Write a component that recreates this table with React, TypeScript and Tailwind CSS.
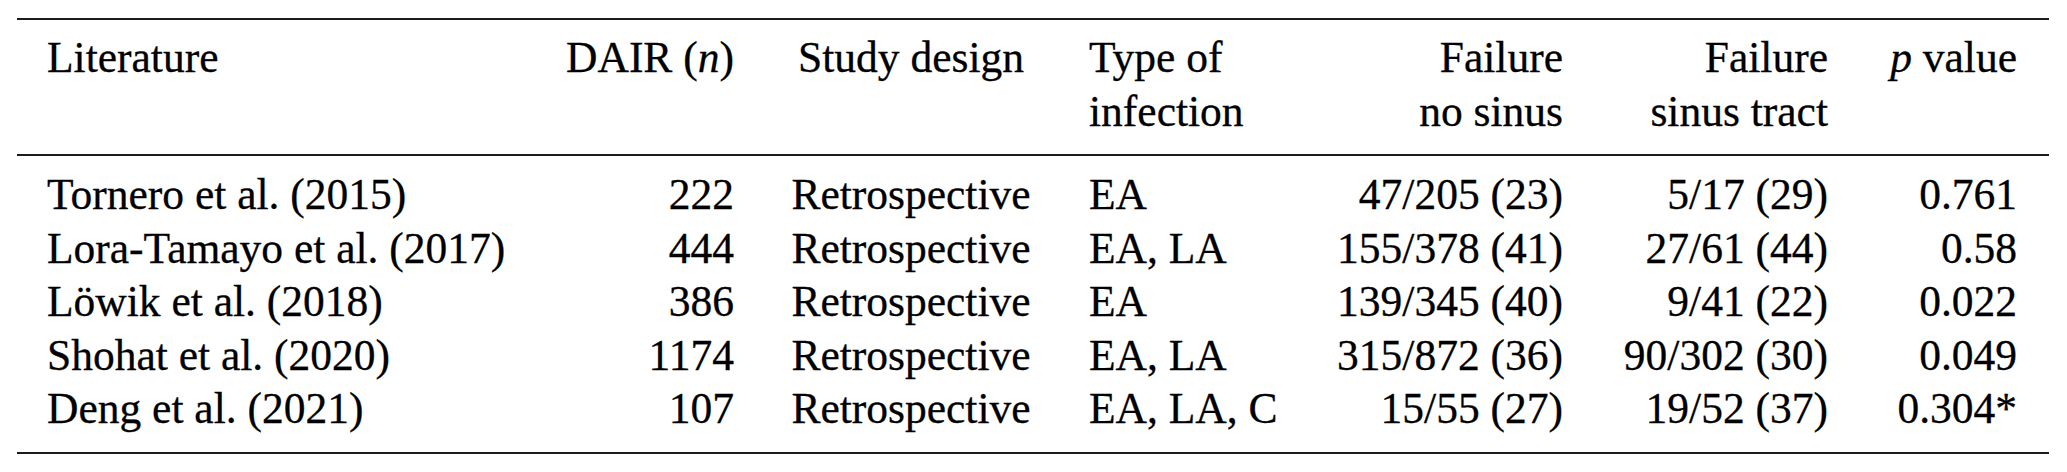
import * as React from "react";

type Row = {
  study: string;
  n: string;
  design: string;
  type: string;
  noSinus: string;
  sinus: string;
  p: string;
};

const ROWS: Row[] = [
  { study: "Tornero et al. (2015)", n: "222", design: "Retrospective", type: "EA", noSinus: "47/205 (23)", sinus: "5/17 (29)", p: "0.761" },
  { study: "Lora-Tamayo et al. (2017)", n: "444", design: "Retrospective", type: "EA, LA", noSinus: "155/378 (41)", sinus: "27/61 (44)", p: "0.58" },
  { study: "Löwik et al. (2018)", n: "386", design: "Retrospective", type: "EA", noSinus: "139/345 (40)", sinus: "9/41 (22)", p: "0.022" },
  { study: "Shohat et al. (2020)", n: "1174", design: "Retrospective", type: "EA, LA", noSinus: "315/872 (36)", sinus: "90/302 (30)", p: "0.049" },
  { study: "Deng et al. (2021)", n: "107", design: "Retrospective", type: "EA, LA, C", noSinus: "15/55 (27)", sinus: "19/52 (37)", p: "0.304*" },
];

export default function App() {
  return (
    <div className="min-h-[472px] w-[2067px] bg-white pt-[18px] pl-[17px] font-['Liberation_Serif','Times_New_Roman',serif] text-black">
      <table className="w-[2032px] table-fixed border-collapse border-y-2 border-[#1c1c1c] text-[43.5px] leading-[53.5px] [-webkit-text-stroke:0.3px_black]">
        <colgroup>
          <col className="w-[543px]" />
          <col className="w-[200px]" />
          <col className="w-[302px]" />
          <col className="w-[238px]" />
          <col className="w-[263px]" />
          <col className="w-[265px]" />
          <col className="w-[221px]" />
        </colgroup>
        <thead>
          <tr className="border-b-2 border-[#1c1c1c] align-top">
            <th className="pt-[11px] pb-[16px] pl-[30px] text-left font-normal">Literature</th>
            <th className="pt-[11px] pb-[16px] pr-[26px] text-right font-normal">
              DAIR (<i>n</i>)
            </th>
            <th className="pt-[11px] pb-[16px] text-center font-normal">Study design</th>
            <th className="pt-[11px] pb-[16px] pl-[27px] text-left font-normal">
              Type of
              <br />
              infection
            </th>
            <th className="pt-[11px] pb-[16px] text-right font-normal">
              Failure
              <br />
              no sinus
            </th>
            <th className="pt-[11px] pb-[16px] text-right font-normal">
              Failure
              <br />
              sinus tract
            </th>
            <th className="pt-[11px] pb-[16px] pr-[32px] text-right font-normal">
              <i>p</i> value
            </th>
          </tr>
        </thead>
        <tbody>
          {ROWS.map((row, i) => {
            const pad =
              i === 0 ? "pt-[12px]" : i === ROWS.length - 1 ? "pb-[16px]" : "";
            return (
              <tr key={row.study} className="whitespace-nowrap">
                <td className={`pl-[30px] text-left ${pad}`}>{row.study}</td>
                <td className={`pr-[26px] text-right ${pad}`}>{row.n}</td>
                <td className={`text-center ${pad}`}>{row.design}</td>
                <td className={`pl-[27px] text-left ${pad}`}>{row.type}</td>
                <td className={`text-right ${pad}`}>{row.noSinus}</td>
                <td className={`text-right ${pad}`}>{row.sinus}</td>
                <td className={`pr-[32px] text-right ${pad}`}>{row.p}</td>
              </tr>
            );
          })}
        </tbody>
      </table>
    </div>
  );
}
